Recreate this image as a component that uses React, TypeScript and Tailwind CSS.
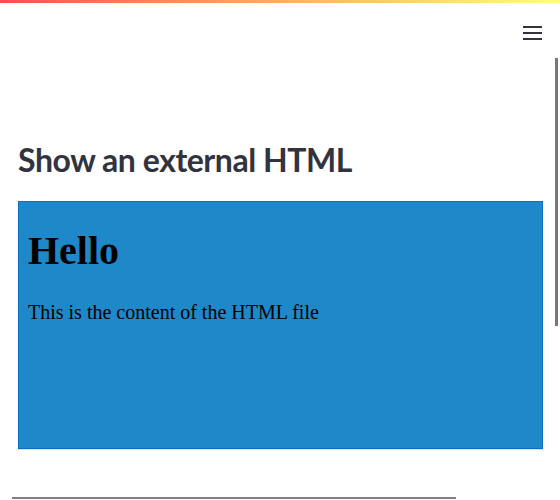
const App = () => {
  return (
    <div className="relative w-[560px] h-[500px] overflow-hidden bg-white font-['Noto_Sans',sans-serif]">
      <div className="h-[3px] w-full bg-gradient-to-r from-[#ff4b4b] to-[#fffd80]" />
      <header className="flex justify-end pr-[16px] pt-[22px]">
        <svg width="22" height="16" viewBox="0 0 22 16">
          <rect x="1" y="1" width="19" height="2" fill="#31333f" />
          <rect x="1" y="7" width="19" height="2" fill="#31333f" />
          <rect x="1" y="13" width="19" height="2" fill="#31333f" />
        </svg>
      </header>
      <main className="px-[18px] pt-[103px]">
        <h2 className="text-[32px] leading-none font-bold text-[#31333f] tracking-[-0.45px] font-['Lato',sans-serif]">
          Show an external HTML
        </h2>
        <div className="mt-[25px] h-[248px] w-[525px] bg-[#1e88c8] border border-[#0a70c4] shadow-[0_1px_0_#cfe5f5] px-[9px] pt-[29px] font-['Liberation_Serif',serif] text-black">
          <h1 className="text-[40px] leading-none font-bold">Hello</h1>
          <p className="mt-[31px] text-[20px] leading-none">This is the content of the HTML file</p>
        </div>
      </main>
      <div className="absolute right-[2px] top-[58px] h-[268px] w-[3px] bg-[#787878]" />
      <div className="absolute left-[12px] bottom-[1px] h-[2px] w-[444px] bg-[#808080]" />
    </div>
  );
};

export default App;
